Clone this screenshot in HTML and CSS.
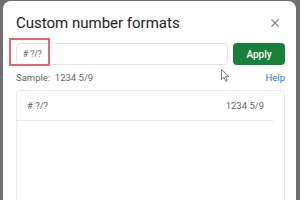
FILE: index.html
```
<!DOCTYPE html>
<html>
<head>
<meta charset="utf-8">
<link rel="stylesheet" href="styles.css">
</head>
<body>
<div class="dialog">
  <div class="header">
    <div class="title">Custom number formats</div>
    <svg class="close" width="8" height="8" viewBox="0 0 8 8"><path d="M0.5 0.5 L7.5 7.5 M7.5 0.5 L0.5 7.5" stroke="#80868b" stroke-width="1.1"/></svg>
  </div>
  <div class="input-row">
    <div class="input">
      <span class="input-text"># ?/?</span>
      <div class="highlight"></div>
    </div>
    <button class="apply">Apply</button>
  </div>
  <div class="sample-row">
    <span class="sample">Sample:&nbsp; 1234 5/9</span>
    <svg class="cursor" width="9" height="13" viewBox="0 0 9 13"><path d="M0.5 0.5 L0.5 10.5 L3 8.2 L4.8 12.3 L6.3 11.6 L4.6 7.6 L8 7.6 Z" fill="#fff" stroke="#7a7a7a" stroke-width="1"/></svg>
    <span class="help">Help</span>
  </div>
  <div class="list">
    <div class="list-item">
      <span class="fmt"># ?/?</span>
      <span class="val">1234 5/9</span>
    </div>
  </div>
</div>
</body>
</html>
```
FILE: styles.css
```
html, body {
  margin: 0;
  height: 100%;
}
body {
  background: #707070;
  padding: 1px 4px 0 3px;
  box-sizing: border-box;
  display: flex;
  font-family: Roboto, "Liberation Sans", sans-serif;
  overflow: hidden;
}
.dialog {
  flex: 1;
  background: #fff;
  border-radius: 8px 8px 0 0;
  padding: 0 11px 0 13px;
  display: flex;
  flex-direction: column;
  position: relative;
}
.header {
  display: flex;
  align-items: center;
  justify-content: space-between;
  height: 42px;
  padding-top: 2px;
  box-sizing: border-box;
}
.title {
  font-size: 15px;
  color: #202124;
}
.close {
  margin-right: 6px;
}
.input-row {
  display: flex;
  gap: 5px;
  height: 22px;
}
.input {
  flex: 1;
  border: 1px solid #e3e5e8;
  border-radius: 4px;
  display: flex;
  align-items: center;
  padding-left: 6px;
  position: relative;
}
.input-text {
  font-size: 8.5px;
  color: #5f6368;
}
.highlight {
  position: absolute;
  left: -8px;
  top: -6px;
  width: 37px;
  height: 24px;
  border: 2px solid #e8646b;
}
.apply {
  width: 52px;
  background: #188038;
  color: #fff;
  border: none;
  border-radius: 4px;
  font-family: Roboto, "Liberation Sans", sans-serif;
  font-size: 10px;
  font-weight: 500;
  padding: 0;
}
.sample-row {
  display: flex;
  align-items: center;
  height: 25px;
  position: relative;
}
.sample {
  font-size: 9.5px;
  color: #5f6368;
  flex: 1;
}
.cursor {
  position: absolute;
  left: 205px;
  top: 4px;
}
.help {
  font-size: 9.5px;
  color: #1a73e8;
}
.list {
  flex: 1;
  border: 1px solid #e8eaed;
  border-bottom: none;
  border-radius: 4px 4px 0 0;
  padding-right: 10px;
}
.list-item {
  display: flex;
  justify-content: space-between;
  align-items: center;
  height: 29px;
  padding: 0 10px;
  border-bottom: 1px solid #e8eaed;
  font-size: 9.5px;
  color: #5f6368;
}
```
